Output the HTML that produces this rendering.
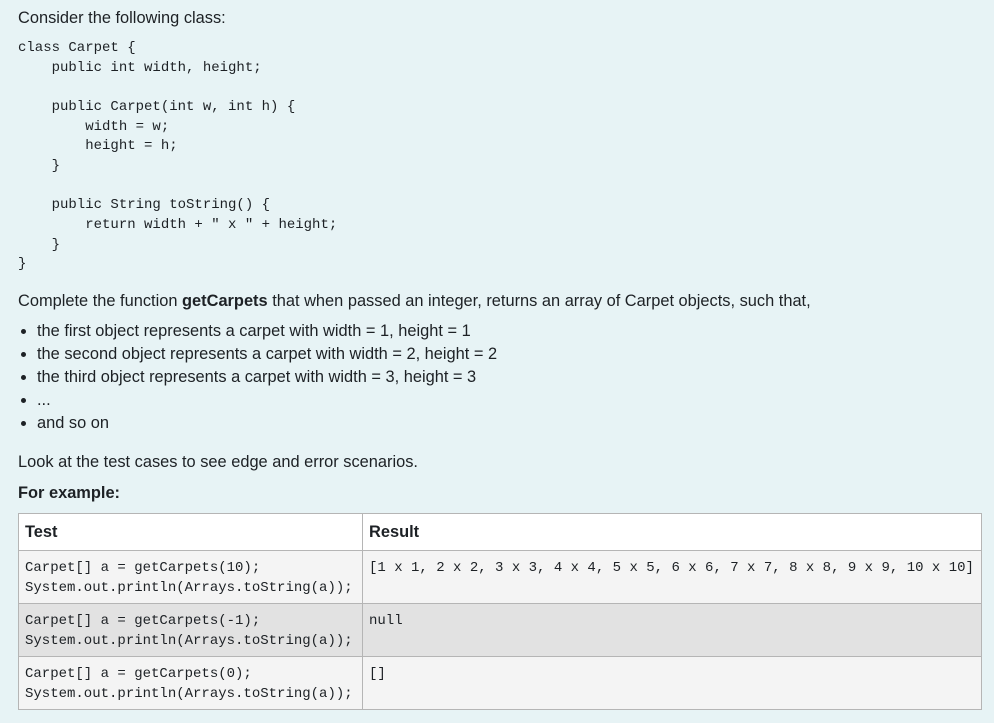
<!DOCTYPE html>
<html><head><style>
body{margin:0;background:#e7f3f5;width:994px;height:723px;overflow:hidden;font-family:"Liberation Sans",sans-serif;color:#1d2125;}
.p{position:absolute;left:18px;font-size:16.4px;white-space:nowrap;}
pre{position:absolute;left:18px;top:39px;margin:0;font-family:"Liberation Mono",monospace;font-size:14px;line-height:19.65px;color:#1d2125;}
ul{position:absolute;left:18px;top:320px;margin:0;padding:0 0 0 19px;font-size:16.4px;line-height:23px;}
table{position:absolute;left:18px;top:513px;width:964px;border-collapse:collapse;}
td,th{border:1px solid #b5b5b5;vertical-align:top;text-align:left;padding:0 6px;}
th{background:#fff;height:36px;font-size:16.4px;vertical-align:middle;}
td{font-family:"Liberation Mono",monospace;font-size:14px;line-height:20px;height:53px;padding-top:7px;padding-bottom:0;box-sizing:border-box;white-space:pre;}
tr.a td{background:#f4f4f4;} tr.b td{background:#e2e2e2;}
</style></head><body>
<div class="p" style="top:9px">Consider the following class:</div>
<pre>class Carpet {
    public int width, height;

    public Carpet(int w, int h) {
        width = w;
        height = h;
    }

    public String toString() {
        return width + " x " + height;
    }
}</pre>
<div class="p" style="top:292px">Complete the function <b>getCarpets</b> that when passed an integer, returns an array of Carpet objects, such that,</div>
<ul>
<li>the first object represents a carpet with width = 1, height = 1</li>
<li>the second object represents a carpet with width = 2, height = 2</li>
<li>the third object represents a carpet with width = 3, height = 3</li>
<li>...</li>
<li>and so on</li>
</ul>
<div class="p" style="top:453px">Look at the test cases to see edge and error scenarios.</div>
<div class="p" style="top:484px"><b>For example:</b></div>
<table>
<tr><th style="width:331px">Test</th><th>Result</th></tr>
<tr class="a"><td>Carpet[] a = getCarpets(10);
System.out.println(Arrays.toString(a));</td><td>[1 x 1, 2 x 2, 3 x 3, 4 x 4, 5 x 5, 6 x 6, 7 x 7, 8 x 8, 9 x 9, 10 x 10]</td></tr>
<tr class="b"><td>Carpet[] a = getCarpets(-1);
System.out.println(Arrays.toString(a));</td><td>null</td></tr>
<tr class="a"><td>Carpet[] a = getCarpets(0);
System.out.println(Arrays.toString(a));</td><td>[]</td></tr>
</table>
</body></html>
